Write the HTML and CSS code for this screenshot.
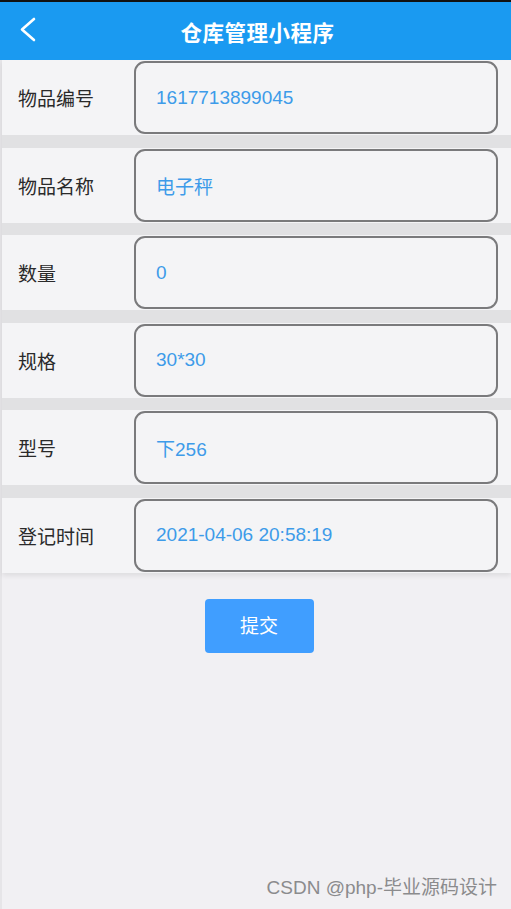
FILE: index.html
```html
<!DOCTYPE html>
<html lang="zh-CN">
<head>
  <meta charset="UTF-8">
  <meta name="viewport" content="width=device-width, initial-scale=1.0">
  <title>仓库管理小程序</title>
  <link rel="stylesheet" href="styles.css">
</head>
<body>
  <div class="header">
    <a href="#" class="back">
      <svg width="20" height="26" viewBox="0 0 20 26">
        <polyline points="15,2 3,12.5 15,23" fill="none" stroke="#fff" stroke-width="2.6" stroke-linecap="round" stroke-linejoin="round"/>
      </svg>
    </a>
    <h1>仓库管理小程序</h1>
  </div>

  <div class="page">
    <div class="form">
      <div class="row">
        <label>物品编号</label>
        <div class="field">1617713899045</div>
      </div>
      <div class="row">
        <label>物品名称</label>
        <div class="field">电子秤</div>
      </div>
      <div class="row">
        <label>数量</label>
        <div class="field">0</div>
      </div>
      <div class="row">
        <label>规格</label>
        <div class="field">30*30</div>
      </div>
      <div class="row">
        <label>型号</label>
        <div class="field">下256</div>
      </div>
      <div class="row">
        <label>登记时间</label>
        <div class="field">2021-04-06 20:58:19</div>
      </div>
    </div>

    <div class="actions">
      <button class="submit">提交</button>
    </div>

    <div class="footer">CSDN @php-毕业源码设计</div>
  </div>
</body>
</html>
```

FILE: styles.css
```css
* {
  box-sizing: border-box;
}
body {
  font-family: "Liberation Sans", "Noto Sans CJK SC", sans-serif;
  margin: 0;
  padding: 0;
  background: #f1f0f3;
  min-height: 100vh;
  display: flex;
  flex-direction: column;
}
.header {
  height: 60px;
  border-top: 2px solid #111;
  background-color: #1a9af1;
  display: flex;
  align-items: center;
  justify-content: center;
  position: relative;
}
.back {
  position: absolute;
  left: 19px;
  top: 15px;
  display: block;
  line-height: 0;
}
h1 {
  margin: 0 0 0 4px;
  color: white;
  font-size: 21.5px;
  font-weight: bold;
  letter-spacing: 0.5px;
}
.page {
  flex: 1;
  display: flex;
  flex-direction: column;
  border-left: 2px solid #e6e5e8;
}
.form {
  display: flex;
  flex-direction: column;
  gap: 12.5px;
  background-color: #e1e1e3;
  box-shadow: 0 3px 5px rgba(0, 0, 0, 0.08);
}
.row {
  height: 75px;
  background-color: #f4f4f6;
  display: flex;
  align-items: center;
  padding: 1px 13px 1px 0;
}
label {
  width: 132px;
  padding-left: 16px;
  font-size: 19px;
  color: #2a2a2a;
}
.field {
  flex: 1;
  align-self: stretch;
  display: flex;
  align-items: center;
  padding-left: 20px;
  border: 2px solid #7a7a7c;
  border-radius: 11px;
  background-color: #f4f4f6;
  font-size: 19px;
  color: #3d9be9;
}
.actions {
  display: flex;
  justify-content: center;
  padding-top: 26px;
}
.submit {
  width: 109px;
  height: 54px;
  margin-left: 5px;
  padding-bottom: 4px;
  border: none;
  border-radius: 4px;
  background-color: #409eff;
  color: white;
  font-family: inherit;
  font-size: 19px;
}
.footer {
  margin-top: auto;
  padding: 0 14px 10px 0;
  text-align: right;
  color: #8b8b8d;
  font-size: 19px;
}
```
